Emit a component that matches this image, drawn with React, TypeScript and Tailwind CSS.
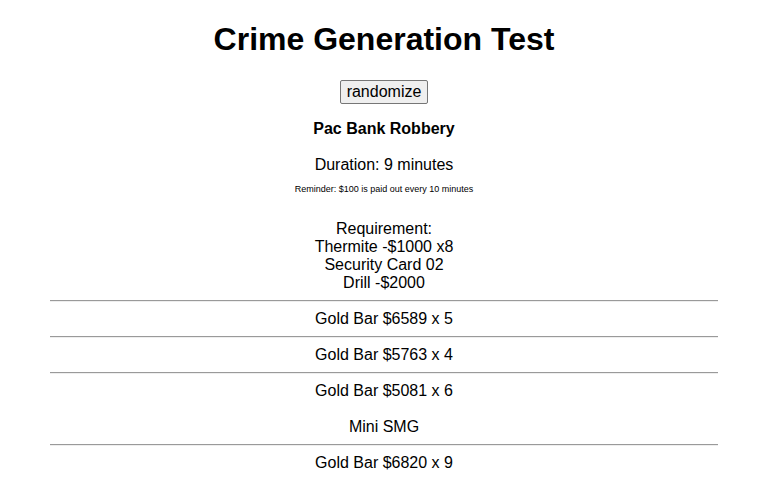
const rows = [
  { label: "Gold Bar $6589 x 5", rule: true },
  { label: "Gold Bar $5763 x 4", rule: true },
  { label: "Gold Bar $5081 x 6", rule: true },
  { label: "Mini SMG", rule: false },
  { label: "Gold Bar $6820 x 9", rule: true },
];

const requirements = ["Thermite -$1000 x8", "Security Card 02", "Drill -$2000"];

const App = () => {
  return (
    <div className="flex flex-col items-center text-center text-black bg-white font-['Liberation_Sans',Arial,sans-serif] text-[16px] leading-[18px]">
      <h1 className="mt-[21px] mb-[22px] text-[32px] leading-[37px] font-bold">Crime Generation Test</h1>
      <button className="h-[24px] px-[6px] bg-[#efefef] border border-[#767676] rounded-[2px] text-[16px] leading-[18px]">
        randomize
      </button>
      <p className="mt-[16px] font-bold">Pac Bank Robbery</p>
      <p className="mt-[18px]">Duration: 9 minutes</p>
      <p className="mt-[10px] text-[9px] leading-[10px]">Reminder: $100 is paid out every 10 minutes</p>
      <div className="mt-[26px]">
        <p>Requirement:</p>
        {requirements.map((r) => (
          <p key={r}>{r}</p>
        ))}
      </div>
      <div className="mt-[8px] w-[668px]">
        {rows.map((row, i) => (
          <div key={i}>
            {row.rule ? (
              <div className="border-t border-b border-t-[#9a9a9a] border-b-[#eeeeee]" />
            ) : (
              <div className="h-[2px]" />
            )}
            <p className="py-[8px] leading-[18px]">{row.label}</p>
          </div>
        ))}
      </div>
    </div>
  );
};

export default App;
